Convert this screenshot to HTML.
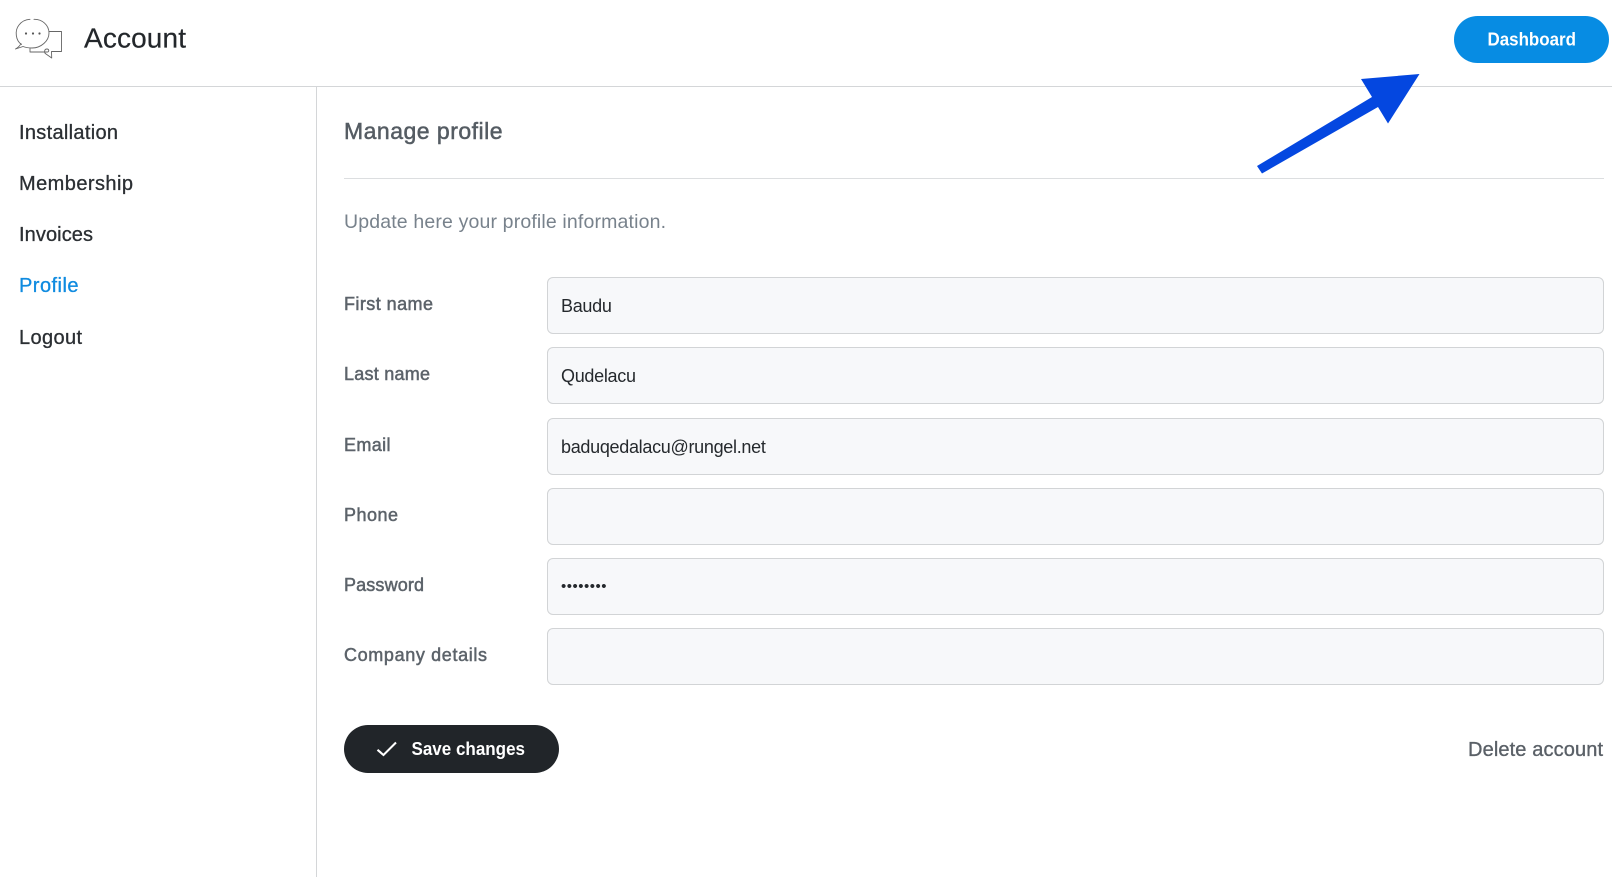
<!DOCTYPE html>
<html lang="en">
<head>
<meta charset="utf-8">
<title>Account</title>
<style>
html,body{margin:0;padding:0;background:#fff;width:1612px;height:877px;overflow:hidden}
body{position:relative;font-family:"Liberation Sans",sans-serif}
.box{position:absolute;box-sizing:border-box}
input{position:absolute;left:547px;width:1057px;height:57px;box-sizing:border-box;margin:0;padding:1px 13px 0;background:#f7f8fa;border:1px solid #d2d4d6;border-radius:6px;font:18px "Liberation Sans",sans-serif;letter-spacing:-.3px;color:#25292d;outline:0}
svg{position:absolute;left:0;top:0;pointer-events:none}
text{font-family:"Liberation Sans",sans-serif}
.nav{font-size:20px;fill:#2b2f33;stroke:#2b2f33;stroke-width:.3px}
.lab{font-size:18px;fill:#5c636a;stroke:#5c636a;stroke-width:.5px}
.btn{font-size:18px;font-weight:700;fill:#fff}
</style>
</head>
<body>
<div class="box" style="left:0;top:86px;width:1612px;height:1px;background:#d4d6d8"></div>
<div class="box" style="left:316px;top:86px;width:1px;height:791px;background:#d4d6d8"></div>
<div class="box" style="left:344px;top:178px;width:1260px;height:1px;background:#dcdee0"></div>
<div class="box" style="left:1454px;top:16px;width:155px;height:47px;border-radius:24px;background:#078ce3"></div>
<div class="box" style="left:344px;top:725px;width:215px;height:48px;border-radius:24px;background:#212529"></div>

<input type="text" value="Baudu" style="top:277px">
<input type="text" value="Qudelacu" style="top:347px">
<input type="text" value="baduqedalacu@rungel.net" style="top:418px">
<input type="text" value="" style="top:488px">
<input type="password" value="12345678" style="top:558px;font-size:15px;letter-spacing:.5px;padding-top:0">
<input type="text" value="" style="top:628px">

<svg width="1612" height="877" viewBox="0 0 1612 877" xmlns="http://www.w3.org/2000/svg">
  <!-- logo -->
  <g fill="none" stroke="#666" stroke-width=".9" stroke-linejoin="round" stroke-linecap="round">
    <path d="M21.500 44.500C15.500 40.500 14.500 30.500 19 25C22 21 26.500 19.500 30 19.300M34 19.300C42 19 49 25 49 33C49 41 41 48 32 48C28 48 25.500 47.500 23 46.500L15.500 49C18 47.500 20 46 21 43.500"/>
    <path d="M49 31.500H61.500V51.500H51.500L51.700 58L46 54C44 53 44 49 47 49C49 49 49.500 52 47.500 52H30V48"/>
  </g>
  <g fill="#555"><circle cx="26" cy="33.500" r="1.100"/><circle cx="33" cy="33.500" r="1.100"/><circle cx="39.500" cy="33.500" r="1.100"/></g>

  <text x="84" y="47.500" font-size="28" fill="#23272b" stroke="#23272b" stroke-width=".2" textLength="102" lengthAdjust="spacing">Account</text>

  <text class="nav" x="19" y="139" textLength="99" lengthAdjust="spacing">Installation</text>
  <text class="nav" x="19" y="190" textLength="114" lengthAdjust="spacing">Membership</text>
  <text class="nav" x="19" y="241" textLength="74" lengthAdjust="spacing">Invoices</text>
  <text class="nav" x="19" y="292" textLength="59.500" lengthAdjust="spacing" style="fill:#0f8be0;stroke:#0f8be0">Profile</text>
  <text class="nav" x="19" y="344" textLength="63" lengthAdjust="spacing">Logout</text>

  <text x="344" y="139" font-size="23" fill="#555c63" stroke="#555c63" stroke-width=".5" textLength="158.500" lengthAdjust="spacing">Manage profile</text>
  <text x="344" y="228" font-size="19.500" fill="#78828c" textLength="322" lengthAdjust="spacing">Update here your profile information.</text>

  <text class="lab" x="344" y="310" textLength="89" lengthAdjust="spacing">First name</text>
  <text class="lab" x="344" y="380" textLength="86" lengthAdjust="spacing">Last name</text>
  <text class="lab" x="344" y="451" textLength="46.500" lengthAdjust="spacing">Email</text>
  <text class="lab" x="344" y="521" textLength="54" lengthAdjust="spacing">Phone</text>
  <text class="lab" x="344" y="591" textLength="80" lengthAdjust="spacing">Password</text>
  <text class="lab" x="344" y="661" textLength="143" lengthAdjust="spacing">Company details</text>

  <text class="btn" x="1487.500" y="45.500" textLength="88.500" lengthAdjust="spacingAndGlyphs">Dashboard</text>
  <text class="btn" x="411.500" y="755" textLength="113.500" lengthAdjust="spacingAndGlyphs">Save changes</text>
  <path d="M377.500 749.800L383.500 755L396 742.500" fill="none" stroke="#fff" stroke-width="2.100"/>

  <text x="1468" y="756" font-size="20" fill="#5a6067" stroke="#5a6067" stroke-width=".35" textLength="135" lengthAdjust="spacing">Delete account</text>

  <!-- arrow -->
  <polygon points="1419.500,74 1361,79 1372,97 1257,166 1262,173.500 1378,107 1388,123.500" fill="#0447e0"/>
</svg>
</body>
</html>
